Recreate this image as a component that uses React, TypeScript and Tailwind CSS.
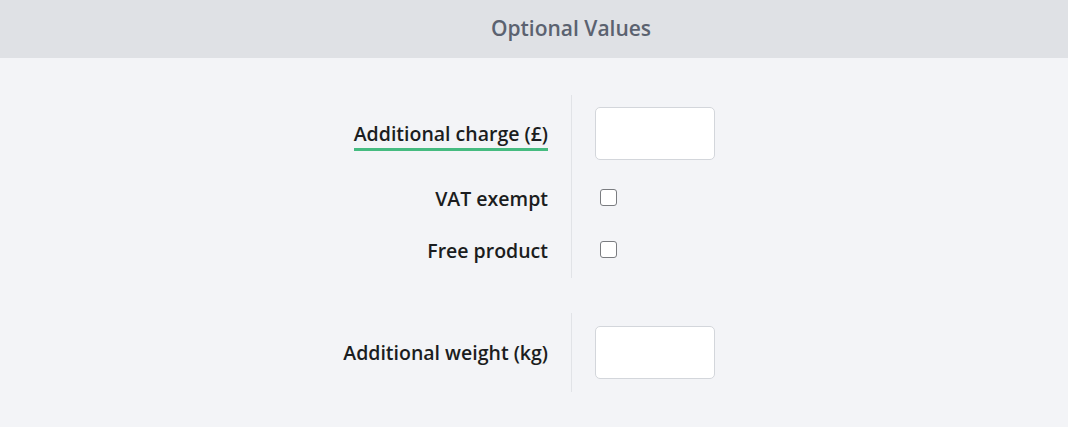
import { useState } from 'react'

interface RowProps {
  label: string
  active?: boolean
  children: React.ReactNode
  className?: string
}

function Row({ label, active, children, className }: RowProps) {
  return (
    <div className={`flex items-center ${className ?? ''}`}>
      <div className="w-[571px] pr-[23px] flex justify-end">
        <span
          className={`text-[19.5px] font-semibold text-[#1b1d20] leading-[24px] ${
            active ? 'border-b-[3px] border-[#45bb80] pb-[2px] mt-[5px]' : ''
          }`}
        >
          {label}
        </span>
      </div>
      <div className="pl-[24px]">{children}</div>
    </div>
  )
}

function TextBox() {
  return (
    <input
      type="text"
      className="w-[120px] h-[53px] bg-white border border-[#d3d6db] rounded-[5px] outline-none px-3"
    />
  )
}

function Check({ checked, onChange }: { checked: boolean; onChange: () => void }) {
  return (
    <button
      onClick={onChange}
      aria-pressed={checked}
      className="ml-[5px] w-[17px] h-[17px] rounded-[3px] border-[1.5px] border-[#7a7c80] bg-white"
    />
  )
}

export default function App() {
  const [vatExempt, setVatExempt] = useState(false)
  const [freeProduct, setFreeProduct] = useState(false)

  return (
    <div className="w-[1068px] h-[427px] bg-[#f3f4f7] font-['Open_Sans',sans-serif] overflow-hidden">
      <div className="h-[58px] bg-[#dfe1e5] flex items-center justify-center">
        <h2 className="text-[21px] font-semibold text-[#5b6270] pl-[74px]">Optional Values</h2>
      </div>

      <div className="mt-[37px] relative">
        <div className="absolute left-[571px] top-0 bottom-0 w-px bg-[#e1e3e7]" />
        <div className="pt-[12px] pb-[1px]">
          <Row label="Additional charge (£)" active className="h-[53px]">
            <TextBox />
          </Row>
          <Row label="VAT exempt" className="h-[52px] mt-[13px]">
            <Check checked={vatExempt} onChange={() => setVatExempt(!vatExempt)} />
          </Row>
          <Row label="Free product" className="h-[52px]">
            <Check checked={freeProduct} onChange={() => setFreeProduct(!freeProduct)} />
          </Row>
        </div>
      </div>

      <div className="mt-[35px] relative">
        <div className="absolute left-[571px] top-0 bottom-0 w-px bg-[#e1e3e7]" />
        <div className="pt-[13px] pb-[13px]">
          <Row label="Additional weight (kg)" className="h-[53px]">
            <TextBox />
          </Row>
        </div>
      </div>
    </div>
  )
}
